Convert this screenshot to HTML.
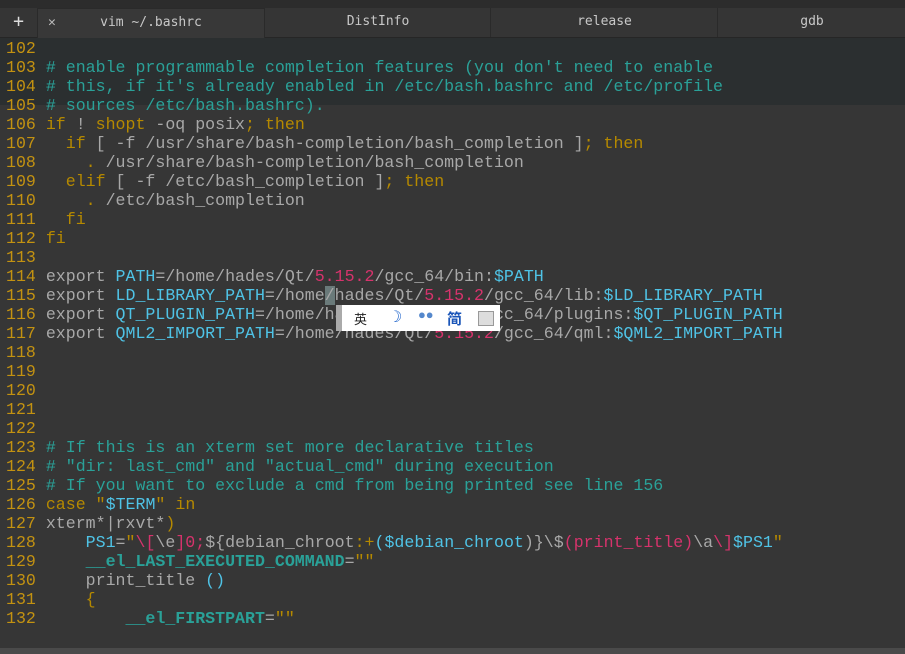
<!DOCTYPE html><html><head><style>
body{margin:0;width:905px;height:654px;overflow:hidden;background:#383838;font-family:"Liberation Mono",monospace}
.top{position:absolute;left:0;top:0;width:905px;height:8px;background:#2c2c2c}
.tabs{position:absolute;left:0;top:8px;width:905px;height:29px;background:#353535;border-bottom:1px solid #262626}
.tab{position:absolute;top:0;height:29px;line-height:28px;text-align:center;color:#c8c8c8;font-family:"DejaVu Sans Mono",monospace;font-size:13px;border-left:1px solid #2a2a2a}
.bg1{position:absolute;left:0;top:38px;width:905px;height:67px;background:#2b2f30}
.bg2{position:absolute;left:0;top:105px;width:905px;height:543px;background:#363636}
.bot{position:absolute;left:0;top:648px;width:905px;height:6px;background:#4a4a4a}
pre{position:absolute;left:6px;top:39px;margin:0;font-family:"Liberation Mono",monospace;font-size:16.6px;line-height:19px;color:#a8a8a8}
.n{color:#c39211}.c{color:#2aa198}.k{color:#b58900}.v{color:#4fc3e6}.p{color:#d6336c}.t{color:#2aa198;font-weight:bold}
.ime{position:absolute;left:336px;top:305px;width:158px;height:26px;background:#fff;border-left:6px solid #aaa}
</style></head><body>
<div class="top"></div>
<div class="tabs">
<div class="tab" style="left:0;width:37px;border:none;font-size:18px;color:#ddd">+</div>
<div class="tab" style="left:37px;width:226px;background:#383838;border:1px solid #2a2a2a;border-bottom:none"><span style="position:absolute;left:10px;color:#bbb">✕</span>vim ~/.bashrc</div>
<div class="tab" style="left:264px;width:226px">DistInfo</div>
<div class="tab" style="left:490px;width:227px">release</div>
<div class="tab" style="left:717px;width:188px">gdb</div>
</div>
<div class="bg1"></div><div class="bg2"></div><div class="bot"></div>
<pre><span class="n">102</span>
<span class="n">103</span> <span class="c"># enable programmable completion features (you don't need to enable</span>
<span class="n">104</span> <span class="c"># this, if it's already enabled in /etc/bash.bashrc and /etc/profile</span>
<span class="n">105</span> <span class="c"># sources /etc/bash.bashrc).</span>
<span class="n">106</span> <span class="k">if</span> ! <span class="k">shopt</span> -oq posix<span class="k">; then</span>
<span class="n">107</span>   <span class="k">if</span> [ -f /usr/share/bash-completion/bash_completion ]<span class="k">; then</span>
<span class="n">108</span>     <span class="k">.</span> /usr/share/bash-completion/bash_completion
<span class="n">109</span>   <span class="k">elif</span> [ -f /etc/bash_completion ]<span class="k">; then</span>
<span class="n">110</span>     <span class="k">.</span> /etc/bash_completion
<span class="n">111</span>   <span class="k">fi</span>
<span class="n">112</span> <span class="k">fi</span>
<span class="n">113</span>
<span class="n">114</span> export <span class="v">PATH</span>=/home/hades/Qt/<span class="p">5.15.2</span>/gcc_64/bin:<span class="v">$PATH</span>
<span class="n">115</span> export <span class="v">LD_LIBRARY_PATH</span>=/home<span style="background:#6a7a7a">/</span>hades/Qt/<span class="p">5.15.2</span>/gcc_64/lib:<span class="v">$LD_LIBRARY_PATH</span>
<span class="n">116</span> export <span class="v">QT_PLUGIN_PATH</span>=/home/hades/Qt/<span class="p">5.15.2</span>/gcc_64/plugins:<span class="v">$QT_PLUGIN_PATH</span>
<span class="n">117</span> export <span class="v">QML2_IMPORT_PATH</span>=/home/hades/Qt/<span class="p">5.15.2</span>/gcc_64/qml:<span class="v">$QML2_IMPORT_PATH</span>
<span class="n">118</span>
<span class="n">119</span>
<span class="n">120</span>
<span class="n">121</span>
<span class="n">122</span>
<span class="n">123</span> <span class="c"># If this is an xterm set more declarative titles</span>
<span class="n">124</span> <span class="c"># "dir: last_cmd" and "actual_cmd" during execution</span>
<span class="n">125</span> <span class="c"># If you want to exclude a cmd from being printed see line 156</span>
<span class="n">126</span> <span class="k">case</span> <span class="k">"</span><span class="v">$TERM</span><span class="k">"</span> <span class="k">in</span>
<span class="n">127</span> xterm*|rxvt*<span class="k">)</span>
<span class="n">128</span>     <span class="v">PS1</span>=<span class="k">"</span><span class="p">\[</span>\e<span class="p">]0;</span>${debian_chroot<span class="k">:+</span><span class="v">(</span><span class="v">$debian_chroot</span>)}\$<span class="p">(print_title)</span>\a<span class="p">\]</span><span class="v">$PS1</span><span class="k">"</span>
<span class="n">129</span>     <span class="t">__el_LAST_EXECUTED_COMMAND</span>=<span class="k">""</span>
<span class="n">130</span>     print_title <span class="v">()</span>
<span class="n">131</span>     <span class="k">{</span>
<span class="n">132</span>         <span class="t">__el_FIRSTPART</span>=<span class="k">""</span></pre>
<div class="ime"><span style="position:absolute;left:12px;top:4px;font-family:'Noto Sans CJK SC',sans-serif;font-size:13px;color:#222">英</span>
<span style="position:absolute;left:46px;top:2px;color:#2266cc;font-size:16px">☽</span>
<span style="position:absolute;left:76px;top:3px;color:#5588cc;font-size:13px">●●</span>
<span style="position:absolute;left:105px;top:3px;font-family:'Noto Sans CJK SC',sans-serif;font-size:15px;color:#1a55b8;font-weight:bold">简</span>
<span style="position:absolute;left:136px;top:6px;width:14px;height:13px;border:1px solid #999;background:#ddd"></span></div>
</body></html>
